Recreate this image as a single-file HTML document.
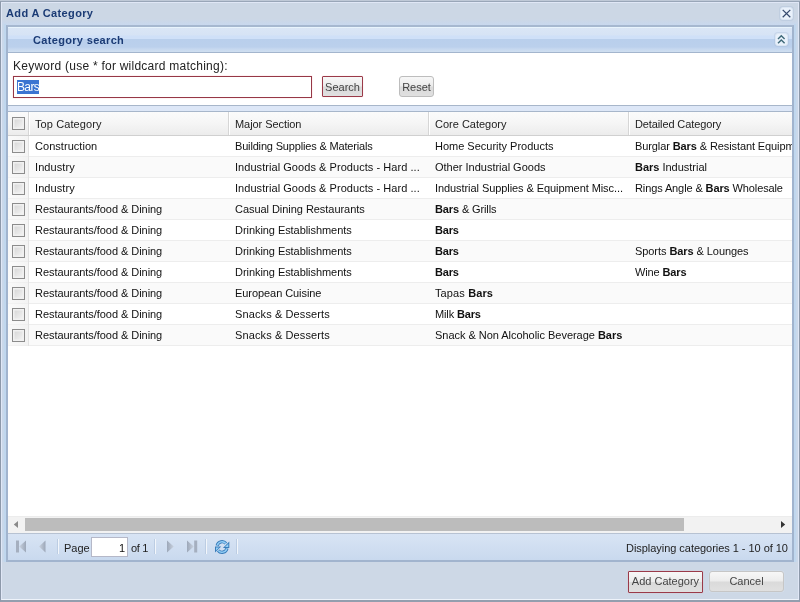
<!DOCTYPE html>
<html>
<head>
<meta charset="utf-8">
<title>Add A Category</title>
<style>
*{box-sizing:border-box;margin:0;padding:0}
html,body{width:800px;height:602px;overflow:hidden}
body{background:#bfc9d7;font-family:"Liberation Sans",sans-serif;font-size:12px;color:#111;position:relative}
.abs{position:absolute}
#win{left:0;top:1px;width:800px;height:601px;background:linear-gradient(#ccd7e5 0,#ccd7e5 17px,#c8d8ee 23px,#cdd8e6 24px);border:1px solid #8d99aa;border-top-color:#99a6b8;border-bottom:2px solid #939eae}
.strip{top:24px;width:4px;height:538px;background:linear-gradient(90deg,#c9d8ea 0,#c9d8ea 50%,#c0d7ee 50%)}
#winhi{left:1px;top:2px;width:798px;height:598px;border:1px solid #e0e7f6;border-bottom-color:#eef3fa}
#wtitle{left:6px;top:6px;font-weight:bold;font-size:11px;color:#1b3b75;line-height:14px;white-space:nowrap;letter-spacing:.36px}
.tool{width:13px;height:13px;border:1px solid #dbe6f4;border-radius:3px;background:#e9f1fb;box-shadow:0 0 0 1px rgba(170,190,215,.35)}
#panel{left:6px;top:25px;width:788px;height:537px;border:2px solid #a1b4ce;border-top-color:#a6b8d0;background:#dde7f7}
#phead{left:8px;top:27px;width:784px;height:25px;background:linear-gradient(#e8f4fd 0,#e8f4fd 1px,#dae6f6 1px,#d6e3f5 8px,#cfe0f8 9px,#cfe0f8 11.5px,#b9cfec 12px,#bbd0ec 20px,#c6d8ef 22px,#d0dff0 25px)}
#pheadb{left:8px;top:52px;width:784px;height:1px;background:#a3b5cd}
#ptitle{left:33px;top:33px;font-weight:bold;font-size:11px;color:#1b3b75;line-height:14px;white-space:nowrap;letter-spacing:.33px}
#pbody{left:8px;top:53px;width:784px;height:52px;background:#fff}
#pbodyb{left:8px;top:105px;width:784px;height:1px;background:#a7b6ca}
#lbl{left:13px;top:59px;font-size:12px;line-height:15px;color:#222;white-space:nowrap;letter-spacing:.245px}
#inp{left:13px;top:76px;width:299px;height:22px;border:1px solid #963846;box-shadow:0 0 1px rgba(255,120,130,.5);background:#fff}
#sel{left:17px;top:80px;height:14px;background:#3b74d1;color:#fff;font-size:12px;line-height:14px;padding:0;letter-spacing:-.65px}
.btn{height:21px;border:1px solid #bdbdbd;border-radius:3px;background:linear-gradient(#f7f7f7 0,#ececec 48%,#dadada 52%,#e0e0e0 100%);font-size:11px;color:#444;text-align:center;line-height:20px;white-space:nowrap}
.btn.red{box-shadow:0 0 1px rgba(255,120,130,.5);border-color:#9a3a49;border-radius:1px}
#grid{left:8px;top:111px;width:784px;height:423px;background:#fff;border-top:1px solid #a7b6ca}
#ghead{left:8px;top:112px;width:784px;height:23px;background:linear-gradient(#fbfbfb 0,#f6f6f6 45%,#ececec 100%)}
#gheadb{left:8px;top:135px;width:784px;height:1px;background:#d0d0d0}
.hsep{top:112px;width:2px;height:23px;border-left:1px solid #d6d6d6;border-right:1px solid #fff}
.ht{top:117px;font-size:11px;line-height:14px;color:#222;white-space:nowrap}
.row{left:8px;width:784px;height:21px;border-bottom:1px solid #ededed;background:#fff}
.row.alt{background:#fafafa}
.cell{font-size:11px;line-height:14px;color:#111;white-space:nowrap;overflow:hidden}
.cb{z-index:2;left:12px;width:13px;height:13px;border:1px solid #8c8c8c;background:linear-gradient(135deg,#d4d4d4,#f6f6f6);box-shadow:inset 0 0 0 1.5px #f1f1f1}
#chkcol{left:8px;top:136px;width:21px;height:210px;background:linear-gradient(90deg,rgba(248,248,248,.6),rgba(238,238,238,.6));border-right:1px solid #e2e2e2}
b{font-weight:bold}
.cell.ell{text-overflow:ellipsis}
#scroll{left:8px;top:516px;width:784px;height:17px;background:#f2f2f2;border-top:1px solid #ececec}
#thumb{left:25px;top:518px;width:659px;height:13px;background:#bcbcbc}
#tbar{left:8px;top:533px;width:784px;height:27px;background:linear-gradient(#d8e4f4,#c9d9ee);border-top:1px solid #b7c2d2}
.tsep{top:539px;width:2px;height:15px;border-left:1px solid #bccde3;border-right:1px solid #f2f6fb}
.tt{top:541px;font-size:11px;line-height:14px;color:#222;white-space:nowrap}
</style>
</head>
<body>
<div id="root" class="abs" style="left:0;top:0;width:800px;height:602px;will-change:transform;background:#bfc9d7">
<div id="win" class="abs"></div>
<div id="winhi" class="abs"></div>
<div class="abs strip" style="left:2px"></div>
<div class="abs strip" style="left:794px;transform:scaleX(-1)"></div>
<div id="wtitle" class="abs">Add A Category</div>
<div class="abs tool" style="left:780px;top:7px"><svg width="11" height="11" viewBox="0 0 11 11" style="display:block"><path d="M1.7 1.9 L9.3 9.3 M9.3 1.9 L1.7 9.3" stroke="#34496e" stroke-width="1.25" fill="none"/></svg></div>

<div id="panel" class="abs"></div>
<div id="phead" class="abs"></div>
<div id="pheadb" class="abs"></div>
<div id="ptitle" class="abs">Category search</div>
<div class="abs tool" style="left:775px;top:33px"><svg width="11" height="11" viewBox="0 0 11 11" style="display:block"><path d="M2 5 L5.3 1.8 L8.6 5 M2 9.2 L5.3 6 L8.6 9.2" stroke="#3d6878" stroke-width="1.4" fill="none"/></svg></div>
<div id="pbody" class="abs"></div>
<div id="pbodyb" class="abs"></div>
<div id="lbl" class="abs">Keyword (use * for wildcard matching):</div>
<div id="inp" class="abs"></div>
<div id="sel" class="abs">Bars</div>
<div class="abs btn red" style="left:322px;top:76px;width:41px">Search</div>
<div class="abs btn" style="left:399px;top:76px;width:35px">Reset</div>

<div id="grid" class="abs"></div>
<div id="ghead" class="abs"></div>
<div id="gheadb" class="abs"></div>
<div class="abs hsep" style="left:28px"></div>
<div class="abs hsep" style="left:228px"></div>
<div class="abs hsep" style="left:428px"></div>
<div class="abs hsep" style="left:628px"></div>
<div class="abs cb" style="top:117px"></div>
<div class="abs ht" style="left:35px;letter-spacing:0.097px">Top Category</div>
<div class="abs ht" style="left:235px;letter-spacing:-0.064px">Major Section</div>
<div class="abs ht" style="left:435px;letter-spacing:-0.004px">Core Category</div>
<div class="abs ht" style="left:635px;letter-spacing:-0.116px">Detailed Category</div>

<div id="rows">
<div class="abs row" style="top:136px"></div>
<div class="abs cb" style="top:140px"></div>
<div class="abs cell" style="left:35px;top:139px;width:190px;letter-spacing:0.044px">Construction</div>
<div class="abs cell" style="left:235px;top:139px;width:190px;letter-spacing:-0.169px">Building Supplies &amp; Materials</div>
<div class="abs cell" style="left:435px;top:139px;width:190px;letter-spacing:-0.005px">Home Security Products</div>
<div class="abs cell" style="left:635px;top:139px;width:157px;letter-spacing:-0.1px">Burglar <b>Bars</b> &amp; Resistant Equipment</div>
<div class="abs row alt" style="top:157px"></div>
<div class="abs cb" style="top:161px"></div>
<div class="abs cell" style="left:35px;top:160px;width:190px;letter-spacing:0.087px">Industry</div>
<div class="abs cell" style="left:235px;top:160px;width:190px;letter-spacing:0.052px">Industrial Goods &amp; Products - Hard ...</div>
<div class="abs cell" style="left:435px;top:160px;width:190px;letter-spacing:-0.008px">Other Industrial Goods</div>
<div class="abs cell" style="left:635px;top:160px;width:157px;letter-spacing:-0.012px"><b>Bars</b> Industrial</div>
<div class="abs row" style="top:178px"></div>
<div class="abs cb" style="top:182px"></div>
<div class="abs cell" style="left:35px;top:181px;width:190px;letter-spacing:0.087px">Industry</div>
<div class="abs cell" style="left:235px;top:181px;width:190px;letter-spacing:0.052px">Industrial Goods &amp; Products - Hard ...</div>
<div class="abs cell" style="left:435px;top:181px;width:190px;letter-spacing:-0.073px">Industrial Supplies &amp; Equipment Misc...</div>
<div class="abs cell" style="left:635px;top:181px;width:157px;letter-spacing:-0.113px">Rings Angle &amp; <b>Bars</b> Wholesale</div>
<div class="abs row alt" style="top:199px"></div>
<div class="abs cb" style="top:203px"></div>
<div class="abs cell" style="left:35px;top:202px;width:190px;letter-spacing:-0.049px">Restaurants/food &amp; Dining</div>
<div class="abs cell" style="left:235px;top:202px;width:190px;letter-spacing:-0.046px">Casual Dining Restaurants</div>
<div class="abs cell" style="left:435px;top:202px;width:190px;letter-spacing:-0.122px"><b>Bars</b> &amp; Grills</div>
<div class="abs row" style="top:220px"></div>
<div class="abs cb" style="top:224px"></div>
<div class="abs cell" style="left:35px;top:223px;width:190px;letter-spacing:-0.049px">Restaurants/food &amp; Dining</div>
<div class="abs cell" style="left:235px;top:223px;width:190px;letter-spacing:-0.057px">Drinking Establishments</div>
<div class="abs cell" style="left:435px;top:223px;width:190px;letter-spacing:-0.156px"><b>Bars</b></div>
<div class="abs row alt" style="top:241px"></div>
<div class="abs cb" style="top:245px"></div>
<div class="abs cell" style="left:35px;top:244px;width:190px;letter-spacing:-0.049px">Restaurants/food &amp; Dining</div>
<div class="abs cell" style="left:235px;top:244px;width:190px;letter-spacing:-0.057px">Drinking Establishments</div>
<div class="abs cell" style="left:435px;top:244px;width:190px;letter-spacing:-0.156px"><b>Bars</b></div>
<div class="abs cell" style="left:635px;top:244px;width:157px;letter-spacing:-0.069px">Sports <b>Bars</b> &amp; Lounges</div>
<div class="abs row" style="top:262px"></div>
<div class="abs cb" style="top:266px"></div>
<div class="abs cell" style="left:35px;top:265px;width:190px;letter-spacing:-0.049px">Restaurants/food &amp; Dining</div>
<div class="abs cell" style="left:235px;top:265px;width:190px;letter-spacing:-0.057px">Drinking Establishments</div>
<div class="abs cell" style="left:435px;top:265px;width:190px;letter-spacing:-0.156px"><b>Bars</b></div>
<div class="abs cell" style="left:635px;top:265px;width:157px;letter-spacing:-0.124px">Wine <b>Bars</b></div>
<div class="abs row alt" style="top:283px"></div>
<div class="abs cb" style="top:287px"></div>
<div class="abs cell" style="left:35px;top:286px;width:190px;letter-spacing:-0.049px">Restaurants/food &amp; Dining</div>
<div class="abs cell" style="left:235px;top:286px;width:190px;letter-spacing:-0.064px">European Cuisine</div>
<div class="abs cell" style="left:435px;top:286px;width:190px;letter-spacing:0.123px">Tapas <b>Bars</b></div>
<div class="abs row" style="top:304px"></div>
<div class="abs cb" style="top:308px"></div>
<div class="abs cell" style="left:35px;top:307px;width:190px;letter-spacing:-0.049px">Restaurants/food &amp; Dining</div>
<div class="abs cell" style="left:235px;top:307px;width:190px;letter-spacing:0.114px">Snacks &amp; Desserts</div>
<div class="abs cell" style="left:435px;top:307px;width:190px;letter-spacing:-0.135px">Milk <b>Bars</b></div>
<div class="abs row alt" style="top:325px"></div>
<div class="abs cb" style="top:329px"></div>
<div class="abs cell" style="left:35px;top:328px;width:190px;letter-spacing:-0.049px">Restaurants/food &amp; Dining</div>
<div class="abs cell" style="left:235px;top:328px;width:190px;letter-spacing:0.114px">Snacks &amp; Desserts</div>
<div class="abs cell" style="left:435px;top:328px;width:190px;letter-spacing:-0.032px">Snack &amp; Non Alcoholic Beverage <b>Bars</b></div>
</div><!--endrows-->
<div id="chkcol" class="abs"></div>

<div id="scroll" class="abs"></div>
<div id="thumb" class="abs"></div>
<svg class="abs" style="left:13px;top:520px" width="6" height="9" viewBox="0 0 6 9"><path d="M5 1 L0.8 4.5 L5 8 Z" fill="#8a8a8a"/></svg>
<svg class="abs" style="left:780px;top:520px" width="6" height="9" viewBox="0 0 6 9"><path d="M1 1 L5.2 4.5 L1 8 Z" fill="#333"/></svg>

<div id="tbar" class="abs"></div>
<svg class="abs" style="left:16px;top:540px" width="11" height="13" viewBox="0 0 11 13"><defs><linearGradient id="gl" x1="0" x2="1" y1="0" y2="0"><stop offset="0" stop-color="#c9d2df"/><stop offset="1" stop-color="#9ca7b8"/></linearGradient><linearGradient id="gr" x1="1" x2="0" y1="0" y2="0"><stop offset="0" stop-color="#c9d2df"/><stop offset="1" stop-color="#9ca7b8"/></linearGradient></defs><rect x="0" y="0.5" width="3" height="12" fill="#a5afbf"/><polygon points="10,0.5 10,12.5 3.2,6.5" fill="url(#gl)"/></svg>
<svg class="abs" style="left:39px;top:540px" width="7" height="13" viewBox="0 0 7 13"><polygon points="6.5,0.5 6.5,12.5 0,6.5" fill="url(#gl)"/></svg>
<svg class="abs" style="left:167px;top:540px" width="7" height="13" viewBox="0 0 7 13"><polygon points="0,0.5 0,12.5 6.8,6.5" fill="url(#gr)"/></svg>
<svg class="abs" style="left:187px;top:540px" width="11" height="13" viewBox="0 0 11 13"><polygon points="0,0.5 0,12.5 6.8,6.5" fill="url(#gr)"/><rect x="7.2" y="0.5" width="3" height="12" fill="#a5afbf"/></svg>
<svg class="abs" style="left:214px;top:539px" width="16" height="16" viewBox="0 0 16 16"><g fill="none" stroke="#3a7dba" stroke-width="3.3"><path d="M3.2 6.6 A4.9 4.9 0 0 1 11.9 4.6"/><path d="M12.9 9.4 A4.9 4.9 0 0 1 4.2 11.4"/></g><polygon points="15.3,2.6 15.3,9 8.9,9" fill="#3a7dba"/><polygon points="1,7.4 1,13.6 7.2,7.4" fill="#3a7dba"/><g fill="none" stroke="#93cff7" stroke-width="1.5"><path d="M3.3 6.4 A4.9 4.9 0 0 1 11.8 4.5"/><path d="M12.8 9.6 A4.9 4.9 0 0 1 4.3 11.5"/></g><polygon points="14.3,4.8 14.3,8 11,8" fill="#93cff7"/><polygon points="2,8.4 2,11.6 5.2,8.4" fill="#93cff7"/></svg>
<div class="abs tt" style="left:64px">Page</div>
<div class="abs" style="left:91px;top:537px;width:37px;height:20px;border:1px solid #b5b8c8;background:#fff;font-size:11px;line-height:20px;text-align:right;padding-right:2px;color:#111">1</div>
<div class="abs tt" style="left:131px;letter-spacing:-.3px">of 1</div>
<div class="abs tt" style="left:626px;letter-spacing:-.04px">Displaying categories 1 - 10 of 10</div>
<div class="abs tsep" style="left:57px"></div>
<div class="abs tsep" style="left:154px"></div>
<div class="abs tsep" style="left:205px"></div>
<div class="abs tsep" style="left:236px"></div>

<div class="abs btn red" style="left:628px;top:571px;width:75px;height:22px;line-height:19px">Add Category</div>
<div class="abs btn" style="left:709px;top:571px;width:75px;line-height:19px;border-color:#c6c6c6;box-shadow:0 0 1px rgba(255,255,255,.8)">Cancel</div>

</div>
</body>
</html>
